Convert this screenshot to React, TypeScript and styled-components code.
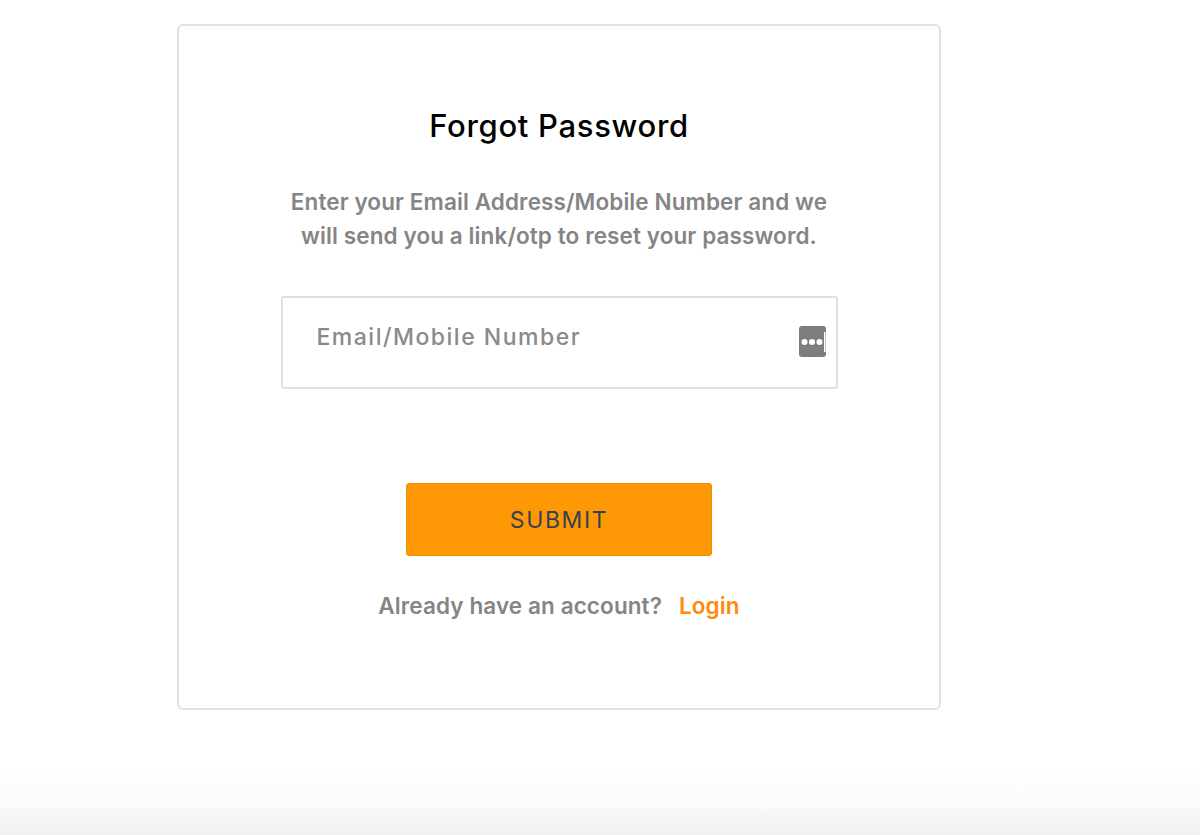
import React from 'react';
import styled, { createGlobalStyle } from 'styled-components';

const GlobalStyle = createGlobalStyle`
    html, body {
        margin: 0;
        padding: 0;
        background: #fff;
        font-family: "Inter", "Liberation Sans", sans-serif;
    }
`;

const StyledPage = styled.div`
    height: 835px;
    overflow: hidden;
    display: flex;
    flex-flow: column nowrap;
    justify-content: space-between;
    padding-top: 24px;
    box-sizing: border-box;
`;

const StyledCard = styled.div`
    box-sizing: border-box;
    width: 764px;
    height: 686px;
    margin-left: 177px;
    padding-top: 83px;
    border: 2px solid #e2e2e2;
    border-radius: 6px;
    display: flex;
    flex-flow: column nowrap;
    align-items: center;
`;

const StyledTitle = styled.h2`
    margin: 0;
    font-size: 31px;
    line-height: 34px;
    font-weight: 500;
    letter-spacing: 0.7px;
    color: #000;
`;

const StyledSubtitle = styled.p`
    margin: 42px 0 0;
    font-size: 22.5px;
    line-height: 34px;
    font-weight: 600;
    letter-spacing: 0.1px;
    text-align: center;
    color: #858585;
`;

const StyledField = styled.div`
    box-sizing: border-box;
    width: 557px;
    height: 93px;
    margin-top: 43px;
    padding: 24px 10px 0 34px;
    border: 2px solid #e0e0e0;
    border-radius: 3px;
    display: flex;
    justify-content: space-between;
    align-items: flex-start;
`;

const StyledPlaceholder = styled.span`
    font-size: 23px;
    line-height: 30px;
    font-weight: 500;
    letter-spacing: 1.5px;
    color: #8a8a8a;
`;

const StyledKeyIcon = styled.svg`
    width: 27px;
    height: 31px;
    margin-top: 4px;
    flex: none;
`;

const StyledButton = styled.button`
    box-sizing: border-box;
    width: 306px;
    height: 73px;
    margin-top: 94px;
    padding: 0;
    border: 1px solid #f09000;
    border-radius: 3px;
    background: #ff9805;
    font-family: inherit;
    font-size: 23px;
    font-weight: 400;
    letter-spacing: 1.6px;
    color: #37414f;
`;

const StyledAccount = styled.p`
    margin: 34px 0 0;
    font-size: 22.5px;
    line-height: 32px;
    font-weight: 600;
    letter-spacing: 0.1px;
    color: #858585;
`;

const StyledLogin = styled.a`
    margin-left: 17px;
    color: #ff8a0d;
    text-decoration: none;
`;

const StyledFooterShade = styled.div`
    height: 70px;
    flex: none;
    background: linear-gradient(to bottom, #ffffff, #fbfbfb 55%, #f0f0f0);
`;

const KeyIcon = () => (
    <StyledKeyIcon viewBox="0 0 27 31">
        <rect width="27" height="31" rx="3" fill="#7d7d7d" />
        <circle cx="5.5" cy="16" r="3" fill="#fff" />
        <circle cx="13" cy="16" r="3" fill="#fff" />
        <circle cx="20.5" cy="16" r="3" fill="#fff" />
        <rect x="25" y="6" width="1.5" height="20" fill="#fff" />
    </StyledKeyIcon>
);

export default function App() {
    return (
        <StyledPage>
            <GlobalStyle />
            <StyledCard>
                <StyledTitle>Forgot Password</StyledTitle>
                <StyledSubtitle>
                    Enter your Email Address/Mobile Number and we
                    <br />
                    will send you a link/otp to reset your password.
                </StyledSubtitle>
                <StyledField>
                    <StyledPlaceholder>Email/Mobile Number</StyledPlaceholder>
                    <KeyIcon />
                </StyledField>
                <StyledButton>SUBMIT</StyledButton>
                <StyledAccount>
                    Already have an account?
                    <StyledLogin href="#">Login</StyledLogin>
                </StyledAccount>
            </StyledCard>
            <StyledFooterShade />
        </StyledPage>
    );
}
